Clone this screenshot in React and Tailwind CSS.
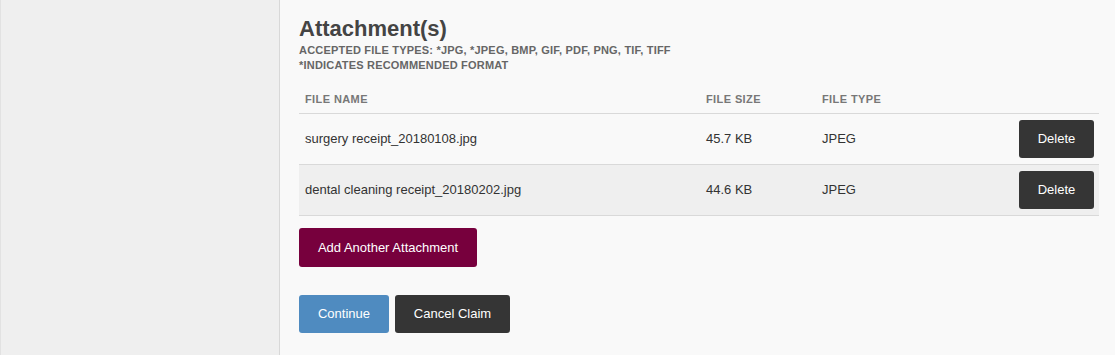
import React from 'react';

const files = [
  { name: 'surgery receipt_20180108.jpg', size: '45.7 KB', type: 'JPEG' },
  { name: 'dental cleaning receipt_20180202.jpg', size: '44.6 KB', type: 'JPEG' },
];

const App = () => {
  return (
    <div className="flex h-[355px] w-full bg-[#f9f9f9] font-['Liberation_Sans',Arial,sans-serif] text-[#333]">
      <div className="w-[280px] shrink-0 border-l border-r border-l-[#e2e2e2] border-r-[#d8d8d8] bg-[#efefef]" />

      <div className="flex-1 pl-[19px] pr-[16px] pt-[16px]">
        <h2 className="text-[22px] font-bold leading-[26px] text-[#444]">Attachment(s)</h2>
        <div className="mt-[1px] text-[11px] font-bold uppercase leading-[15px] tracking-[0.2px] text-[#666]">
          <p>Accepted file types: *JPG, *JPEG, BMP, GIF, PDF, PNG, TIF, TIFF</p>
          <p>*Indicates recommended format</p>
        </div>

        <div className="mt-[17px] w-[800px]">
          <div className="grid grid-cols-[401px_116px_1fr_auto] border-b border-[#d9d9d9] pb-[6px] pt-[2px] text-[11px] font-bold uppercase leading-[15px] tracking-[0.4px] text-[#777]">
            <div className="pl-[6px]">File name</div>
            <div className="pl-[6px]">File size</div>
            <div className="pl-[6px]">File type</div>
            <div />
          </div>
          {files.map((f, i) => (
            <div
              key={f.name}
              className={`grid h-[51px] grid-cols-[401px_116px_1fr_auto] items-center border-b border-[#d9d9d9] text-[13px] ${
                i % 2 === 1 ? 'bg-[#efefef]' : ''
              }`}
            >
              <div className="pl-[6px]">{f.name}</div>
              <div className="pl-[6px]">{f.size}</div>
              <div className="pl-[6px]">{f.type}</div>
              <div className="pr-[5px]">
                <button className="h-[38px] w-[75px] rounded-[3px] bg-[#353535] text-[13px] text-white">
                  Delete
                </button>
              </div>
            </div>
          ))}
        </div>

        <button className="mt-[12px] h-[39px] w-[178px] rounded-[3px] bg-[#77003d] text-[13px] text-white">
          Add Another Attachment
        </button>

        <div className="mt-[28px] flex gap-[6px]">
          <button className="h-[38px] w-[90px] rounded-[3px] bg-[#4f8bc0] text-[13px] text-white">
            Continue
          </button>
          <button className="h-[38px] w-[115px] rounded-[3px] bg-[#353535] text-[13px] text-white">
            Cancel Claim
          </button>
        </div>
      </div>
    </div>
  );
};

export default App;
